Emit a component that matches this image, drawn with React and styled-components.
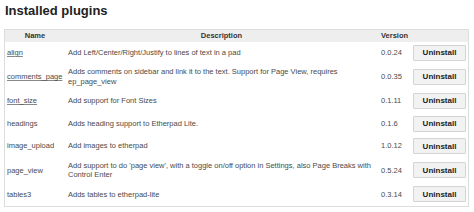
import React from 'react';
import styled, { createGlobalStyle } from 'styled-components';

const GlobalStyle = createGlobalStyle`
  body {
    margin: 0;
    background: #ffffff;
    font-family: 'Liberation Sans', Arial, Helvetica, sans-serif;
    color: #333333;
  }
`;

const plugins = [
  { name: 'align', link: true, description: ['Add Left/Center/Right/Justify to lines of text in a pad'], version: '0.0.24' },
  {
    name: 'comments_page',
    link: true,
    description: ['Adds comments on sidebar and link it to the text. Support for Page View, requires', 'ep_page_view'],
    version: '0.0.35',
  },
  { name: 'font_size', link: true, description: ['Add support for Font Sizes'], version: '0.1.11' },
  { name: 'headings', description: ['Adds heading support to Etherpad Lite.'], version: '0.1.6' },
  { name: 'image_upload', description: ['Add images to etherpad'], version: '1.0.12' },
  {
    name: 'page_view',
    description: ["Add support to do 'page view', with a toggle on/off option in Settings, also Page Breaks with", 'Control Enter'],
    version: '0.5.24',
  },
  { name: 'tables3', description: ['Adds tables to etherpad-lite'], version: '0.3.14' },
];

const App = () => {
  return (
    <Page>
      <GlobalStyle />
      <Title>Installed plugins</Title>
      <Table>
        <colgroup>
          <col style={{ width: 60 }} />
          <col style={{ width: 313 }} />
          <col style={{ width: 32 }} />
          <col style={{ width: 58 }} />
        </colgroup>
        <thead>
          <tr>
            <Th>Name</Th>
            <Th>Description</Th>
            <Th>Version</Th>
            <Th />
          </tr>
        </thead>
        <tbody>
          {plugins.map((p) => (
            <tr key={p.name}>
              <NameCell>
                <PluginName $link={p.link}>{p.name}</PluginName>
              </NameCell>
              <Td>
                {p.description.map((line, i) => (
                  <React.Fragment key={i}>
                    {i > 0 && <br />}
                    {line}
                  </React.Fragment>
                ))}
              </Td>
              <Td>{p.version}</Td>
              <Td>
                <UninstallButton>Uninstall</UninstallButton>
              </Td>
            </tr>
          ))}
        </tbody>
      </Table>
    </Page>
  );
};

const Page = styled.div`
  padding: 3px 5px 0 4px;
  width: 465px;
`;

const Title = styled.h1`
  margin: 0 0 11px 1px;
  font-size: 13px;
  line-height: 15px;
  font-weight: bold;
  color: #222222;
`;

const Table = styled.table`
  width: 465px;
  table-layout: fixed;
  border-collapse: separate;
  border-spacing: 0;
  border: 1px solid #dddddd;
  font-size: 7.5px;
  line-height: 9.5px;
`;

const Th = styled.th`
  background: #eeeeee;
  padding: 1px 3px 1px;
  font-weight: bold;
  text-align: center;
  color: #333333;
`;

const Td = styled.td`
  padding: 3.3px 3px;
  vertical-align: middle;
  color: #4a4a4a;
`;

const NameCell = styled(Td)`
  padding-left: 2px;
`;

const PluginName = styled.span`
  text-decoration: ${(p) => (p.$link ? 'underline' : 'none')};
  text-decoration-color: #888888;
  color: #4a4a4a;
`;

const UninstallButton = styled.button`
  display: block;
  width: 53px;
  height: 16px;
  padding: 0;
  background: #f2f2f2;
  border: 1px solid #d4d4d4;
  border-radius: 1px;
  font-family: 'Liberation Sans', Arial, Helvetica, sans-serif;
  font-size: 8px;
  font-weight: bold;
  color: #222222;
  cursor: pointer;
`;

export default App;
